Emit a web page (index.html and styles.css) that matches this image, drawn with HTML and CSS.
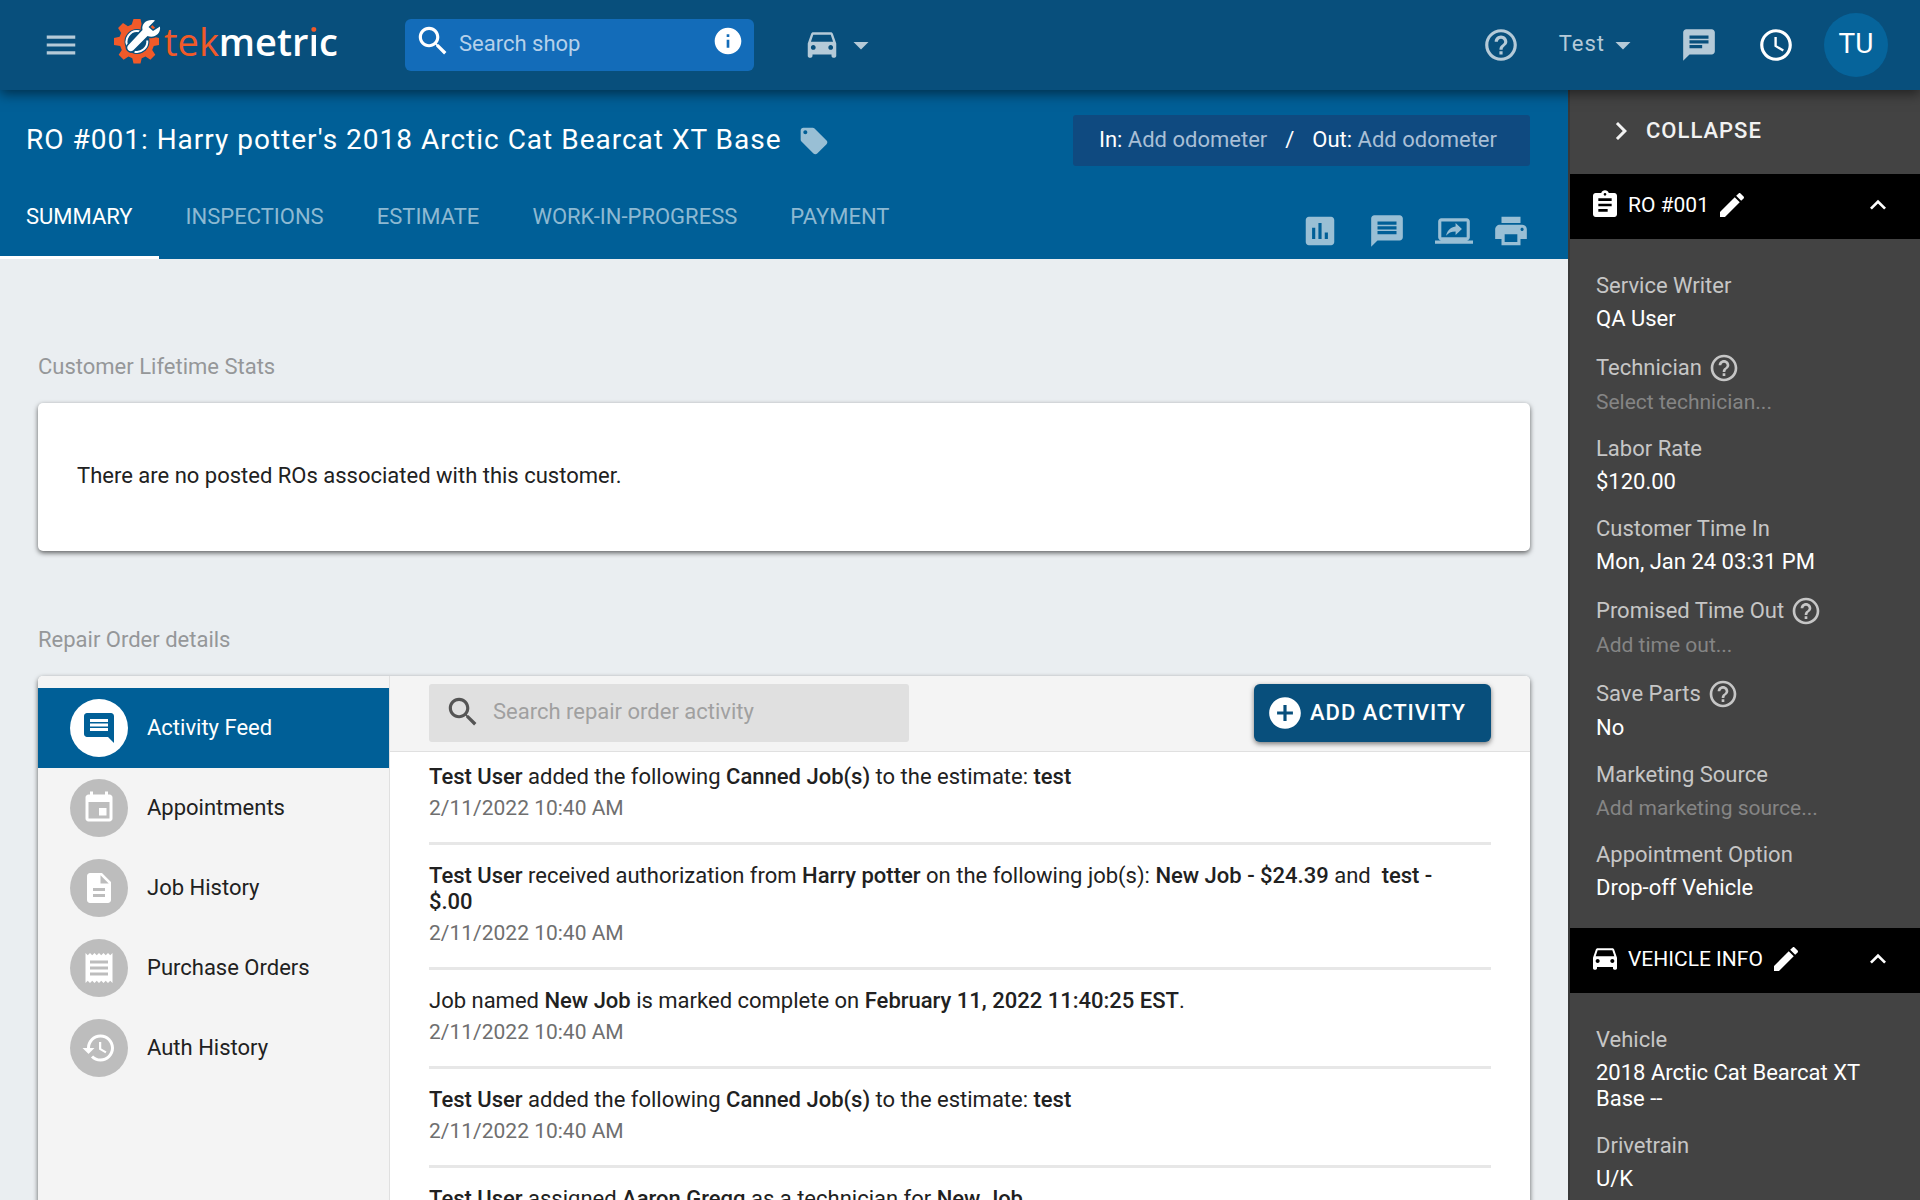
FILE: index.html
```html
<!DOCTYPE html>
<html lang="en">
<head>
  <meta charset="UTF-8">
  <meta name="viewport" content="width=device-width, initial-scale=1.0">
  <title>Tekmetric - RO #001</title>
  <link rel="stylesheet" href="styles.css">
</head>
<body>
  <!-- Icon set -->
  <svg class="icon-set" aria-hidden="true">
    <symbol id="menu" viewBox="0 0 24 24"><path d="M3 18h18v-2H3v2zm0-5h18v-2H3v2zm0-7v2h18V6H3z"/></symbol>
    <symbol id="search" viewBox="0 0 24 24"><path d="M15.5 14h-.79l-.28-.27C15.41 12.59 16 11.11 16 9.5 16 5.91 13.09 3 9.5 3S3 5.91 3 9.5 5.91 16 9.5 16c1.61 0 3.09-.59 4.23-1.57l.27.28v.79l5 4.99L20.49 19l-4.99-5zm-6 0C7.01 14 5 11.99 5 9.5S7.01 5 9.5 5 14 7.01 14 9.5 11.99 14 9.5 14z"/></symbol>
    <symbol id="info" viewBox="0 0 24 24"><path d="M12 2C6.48 2 2 6.48 2 12s4.48 10 10 10 10-4.48 10-10S17.52 2 12 2zm1 15h-2v-6h2v6zm0-8h-2V7h2v2z"/></symbol>
    <symbol id="car" viewBox="0 0 24 24"><path d="M18.92 5.01C18.72 4.42 18.16 4 17.5 4h-11c-.66 0-1.21.42-1.42 1.01L3 11v8c0 .55.45 1 1 1h1c.55 0 1-.45 1-1v-1h12v1c0 .55.45 1 1 1h1c.55 0 1-.45 1-1v-8l-2.08-5.99zM6.5 15c-.83 0-1.5-.67-1.5-1.5S5.67 12 6.5 12s1.5.67 1.5 1.5S7.33 15 6.5 15zm11 0c-.83 0-1.5-.67-1.5-1.5s.67-1.5 1.5-1.5 1.5.67 1.5 1.5-.67 1.5-1.5 1.5zM5 10l1.5-4.5h11L19 10H5z"/></symbol>
    <symbol id="drop" viewBox="0 0 24 24"><path d="M7 10l5 5 5-5z"/></symbol>
    <symbol id="help" viewBox="0 0 24 24"><path d="M11 18h2v-2h-2v2zm1-16C6.48 2 2 6.48 2 12s4.48 10 10 10 10-4.48 10-10S17.52 2 12 2zm0 18c-4.41 0-8-3.59-8-8s3.59-8 8-8 8 3.59 8 8-3.59 8-8 8zm0-14c-2.21 0-4 1.79-4 4h2c0-1.1.9-2 2-2s2 .9 2 2c0 2-3 1.75-3 5h2c0-2.25 3-2.5 3-5 0-2.21-1.79-4-4-4z"/></symbol>
    <symbol id="chat" viewBox="0 0 24 24"><path d="M20 2H4c-1.1 0-1.99.9-1.99 2L2 22l4-4h14c1.1 0 2-.9 2-2V4c0-1.1-.9-2-2-2zM6 9h12v2H6V9zm8 5H6v-2h8v2zm4-6H6V6h12v2z"/></symbol>
    <symbol id="clock" viewBox="0 0 24 24"><path d="M11.99 2C6.47 2 2 6.48 2 12s4.47 10 9.99 10C17.52 22 22 17.52 22 12S17.52 2 11.99 2zM12 20c-4.42 0-8-3.58-8-8s3.58-8 8-8 8 3.58 8 8-3.58 8-8 8zm.5-13H11v6l5.25 3.15.75-1.23-4.5-2.67z"/></symbol>
    <symbol id="tag" viewBox="0 0 24 24"><path d="M21.41 11.58l-9-9C12.05 2.22 11.55 2 11 2H4c-1.1 0-2 .9-2 2v7c0 .55.22 1.05.59 1.42l9 9c.36.36.86.58 1.41.58.55 0 1.05-.22 1.41-.59l7-7c.37-.36.59-.86.59-1.41 0-.55-.23-1.06-.59-1.42zM5.5 7C4.67 7 4 6.33 4 5.5S4.67 4 5.5 4 7 4.67 7 5.5 6.33 7 5.5 7z"/></symbol>
    <symbol id="chart" viewBox="0 0 24 24"><path d="M19 3H5c-1.1 0-2 .9-2 2v14c0 1.1.9 2 2 2h14c1.1 0 2-.9 2-2V5c0-1.1-.9-2-2-2zM9 17H7v-7h2v7zm4 0h-2V7h2v10zm4 0h-2v-4h2v4z"/></symbol>
    <symbol id="message" viewBox="0 0 24 24"><path d="M20 2H4c-1.1 0-1.99.9-1.99 2L2 22l4-4h14c1.1 0 2-.9 2-2V4c0-1.1-.9-2-2-2zm-2 12H6v-2h12v2zm0-3H6V9h12v2zm0-3H6V6h12v2z"/></symbol>
    <symbol id="share" viewBox="0 0 24 24"><path d="M20 18c1.1 0 1.99-.9 1.99-2L22 6c0-1.1-.9-2-2-2H4c-1.1 0-2 .9-2 2v10c0 1.1.9 2 2 2H0v2h24v-2h-4zM4 16V6h16v10.01L4 16zm9-6.87c-3.89.54-5.44 3.2-6 5.87 1.39-1.87 3.22-2.72 6-2.72v2.19l4-3.74L13 7v2.13z"/></symbol>
    <symbol id="print" viewBox="0 0 24 24"><path d="M19 8H5c-1.66 0-3 1.34-3 3v6h4v4h12v-4h4v-6c0-1.66-1.34-3-3-3zm-3 11H8v-5h8v5zm3-7c-.55 0-1-.45-1-1s.45-1 1-1 1 .45 1 1-.45 1-1 1zm-1-9H6v4h12V3z"/></symbol>
    <symbol id="comment" viewBox="0 0 24 24"><path d="M21.99 4c0-1.1-.89-2-1.99-2H4c-1.1 0-2 .9-2 2v12c0 1.1.9 2 2 2h14l4 4-.01-18zM18 14H6v-2h12v2zm0-3H6V9h12v2zm0-3H6V6h12v2z"/></symbol>
    <symbol id="event" viewBox="0 0 24 24"><path d="M17 12h-5v5h5v-5zM16 1v2H8V1H6v2H5c-1.11 0-1.99.9-1.99 2L3 19c0 1.1.89 2 2 2h14c1.1 0 2-.9 2-2V5c0-1.1-.9-2-2-2h-1V1h-2zm3 18H5V8h14v11z"/></symbol>
    <symbol id="document" viewBox="0 0 24 24"><path d="M14 2H6c-1.1 0-1.99.9-1.99 2L4 20c0 1.1.89 2 1.99 2H18c1.1 0 2-.9 2-2V8l-6-6zm2 16H8v-2h8v2zm0-4H8v-2h8v2zm-3-5V3.500L18.500 9H13z"/></symbol>
    <symbol id="receipt" viewBox="0 0 24 24"><path d="M18 17H6v-2h12v2zm0-4H6v-2h12v2zm0-4H6V7h12v2zM3 22l1.500-1.500L6 22l1.500-1.500L9 22l1.500-1.500L12 22l1.500-1.500L15 22l1.500-1.500L18 22l1.500-1.500L21 22V2l-1.500 1.500L18 2l-1.500 1.500L15 2l-1.500 1.500L12 2l-1.500 1.500L9 2 7.500 3.500 6 2 4.500 3.500 3 2v20z"/></symbol>
    <symbol id="history" viewBox="0 0 24 24"><path d="M13 3c-4.970 0-9 4.030-9 9H1l3.890 3.890.070.140L9 12H6c0-3.870 3.130-7 7-7s7 3.130 7 7-3.130 7-7 7c-1.930 0-3.680-.790-4.940-2.060l-1.420 1.420C8.270 19.990 10.510 21 13 21c4.970 0 9-4.030 9-9s-4.030-9-9-9zm-1 5v5l4.280 2.540.720-1.210-3.500-2.080V8H12z"/></symbol>
    <symbol id="add" viewBox="0 0 24 24"><path d="M12 2C6.480 2 2 6.480 2 12s4.480 10 10 10 10-4.480 10-10S17.520 2 12 2zm5 11h-4v4h-2v-4H7v-2h4V7h2v4h4v2z"/></symbol>
    <symbol id="right" viewBox="0 0 24 24"><path d="M10 6L8.590 7.410 13.170 12l-4.580 4.590L10 18l6-6z"/></symbol>
    <symbol id="up" viewBox="0 0 24 24"><path d="M12 8l-6 6 1.410 1.410L12 10.830l4.590 4.580L18 14z"/></symbol>
    <symbol id="clipboard" viewBox="0 0 24 24"><path d="M19 3h-4.180C14.400 1.840 13.300 1 12 1c-1.300 0-2.400.840-2.820 2H5c-1.100 0-2 .9-2 2v14c0 1.100.9 2 2 2h14c1.100 0 2-.9 2-2V5c0-1.100-.9-2-2-2zm-7 0c.550 0 1 .450 1 1s-.450 1-1 1-1-.450-1-1 .450-1 1-1zm2 14H7v-2h7v2zm3-4H7v-2h10v2zm0-4H7V7h10v2z"/></symbol>
    <symbol id="edit" viewBox="0 0 24 24"><path d="M3 17.250V21h3.750L17.810 9.940l-3.750-3.750L3 17.250zM20.710 7.040c.390-.390.390-1.020 0-1.410l-2.340-2.340c-.390-.390-1.020-.390-1.410 0l-1.830 1.830 3.750 3.750 1.830-1.830z"/></symbol>
  </svg>

  <!-- Top bar -->
  <header class="topbar">
    <button class="menu-button" aria-label="Menu"><svg class="icon"><use href="#menu"/></svg></button>
    <a class="logo" href="#">
      <svg class="logo-mark" viewBox="0 0 46 46">
        <path class="gear" fill-rule="evenodd" d="M19.500 1h7l1.200 5.600 3.800 1.600 4.900-3.100 4.900 4.900-3.100 4.900 1.600 3.800 5.200 1.200v7l-5.200 1.200-1.600 3.800 3.100 4.900-4.900 4.900-4.900-3.100-3.800 1.600-1.200 5.300h-7l-1.200-5.300-3.800-1.600-4.900 3.100-4.900-4.900 3.100-4.900-1.600-3.800L0 26.900v-7l5.600-1.200 1.600-3.800L4.100 10 9 5.100l4.900 3.100 3.800-1.600zM23 11.500a12 12 0 1 0 .1 0z"/>
        <circle class="hub" cx="23" cy="23.500" r="12.500"/>
        <path class="ring" d="M25.500 13.300A10.500 10.500 0 0 0 14.500 29.500M33.300 22.500A10.500 10.500 0 0 1 20.500 33.700"/>
        <path class="wrench-edge" d="M46 8.500L39 13l-4.500-4L41 2.500C34 .5 27 5 28.500 12L14 27.500c-2.500 3 1.500 7.500 5 5L33.500 18C40 20.500 47 16 46 8.500z"/>
        <path class="wrench" d="M46 8.500L39 13l-4.500-4L41 2.500C34 .5 27 5 28.500 12L14 27.500c-2.500 3 1.500 7.500 5 5L33.500 18C40 20.500 47 16 46 8.500z"/>
      </svg>
      <span class="logo-text"><span class="logo-tek">tek</span>metr<span class="logo-i">i</span>c</span>
    </a>
    <label class="shop-search">
      <svg class="icon"><use href="#search"/></svg>
      <input type="text" placeholder="Search shop" aria-label="Search shop">
      <svg class="icon-small"><use href="#info"/></svg>
    </label>
    <button class="car-button" aria-label="Vehicles"><svg class="icon"><use href="#car"/></svg><svg class="icon-drop"><use href="#drop"/></svg></button>
    <div class="topbar-right">
      <button aria-label="Help"><svg class="icon"><use href="#help"/></svg></button>
      <button class="shop-button"><span>Test</span><svg class="icon-drop"><use href="#drop"/></svg></button>
      <button aria-label="Messages"><svg class="icon"><use href="#chat"/></svg></button>
      <button class="clock-button" aria-label="Time clock"><svg class="icon"><use href="#clock"/></svg></button>
      <button class="avatar">TU</button>
    </div>
  </header>

  <div class="app">
    <main class="main">
      <!-- Repair order header -->
      <section class="ro-header">
        <div class="ro-title-row">
          <h1>RO #001: Harry potter's 2018 Arctic Cat Bearcat XT Base</h1>
          <button class="tag-button" aria-label="Labels"><svg class="icon-small"><use href="#tag"/></svg></button>
          <div class="odometer">
            <span>In: <a href="#">Add odometer</a></span>
            <span>/</span>
            <span>Out: <a href="#">Add odometer</a></span>
          </div>
        </div>
        <div class="ro-nav-row">
          <nav class="tabs">
            <a class="tab active" href="#">SUMMARY</a>
            <a class="tab" href="#">INSPECTIONS</a>
            <a class="tab" href="#">ESTIMATE</a>
            <a class="tab" href="#">WORK-IN-PROGRESS</a>
            <a class="tab" href="#">PAYMENT</a>
          </nav>
          <div class="ro-actions">
            <button class="wide" aria-label="Report"><svg class="icon"><use href="#chart"/></svg></button>
            <button class="wide" aria-label="Message"><svg class="icon"><use href="#message"/></svg></button>
            <button aria-label="Share"><svg class="icon"><use href="#share"/></svg></button>
            <button aria-label="Print"><svg class="icon"><use href="#print"/></svg></button>
          </div>
        </div>
      </section>

      <div class="content">
        <h2>Customer Lifetime Stats</h2>
        <div class="card stats-card">There are no posted ROs associated with this customer.</div>

        <h2>Repair Order details</h2>
        <div class="card details-card">
          <nav class="side-menu">
            <a class="side-item active" href="#"><span class="bubble"><svg><use href="#comment"/></svg></span>Activity Feed</a>
            <a class="side-item" href="#"><span class="bubble"><svg><use href="#event"/></svg></span>Appointments</a>
            <a class="side-item" href="#"><span class="bubble"><svg><use href="#document"/></svg></span>Job History</a>
            <a class="side-item" href="#"><span class="bubble"><svg><use href="#receipt"/></svg></span>Purchase Orders</a>
            <a class="side-item" href="#"><span class="bubble"><svg><use href="#history"/></svg></span>Auth History</a>
          </nav>
          <div class="feed">
            <div class="feed-bar">
              <label class="feed-search">
                <svg class="icon"><use href="#search"/></svg>
                <input type="text" placeholder="Search repair order activity" aria-label="Search repair order activity">
              </label>
              <button class="add-button"><svg class="icon"><use href="#add"/></svg>ADD ACTIVITY</button>
            </div>
            <ul class="feed-list">
              <li>
                <p><b>Test User</b> added the following <b>Canned Job(s)</b> to the estimate: <b>test</b></p>
                <time>2/11/2022 10:40 AM</time>
              </li>
              <li>
                <p><b>Test User</b> received authorization from <b>Harry potter</b> on the following job(s): <b>New Job - $24.39</b> and &nbsp;<b>test - $.00</b></p>
                <time>2/11/2022 10:40 AM</time>
              </li>
              <li>
                <p>Job named <b>New Job</b> is marked complete on <b>February 11, 2022 11:40:25 EST</b>.</p>
                <time>2/11/2022 10:40 AM</time>
              </li>
              <li>
                <p><b>Test User</b> added the following <b>Canned Job(s)</b> to the estimate: <b>test</b></p>
                <time>2/11/2022 10:40 AM</time>
              </li>
              <li>
                <p><b>Test User</b> assigned <b>Aaron Gregg</b> as a technician for <b>New Job</b></p>
              </li>
            </ul>
          </div>
        </div>
      </div>
    </main>

    <!-- Right panel -->
    <aside class="panel">
      <button class="collapse-button"><svg class="icon-drop"><use href="#right"/></svg>COLLAPSE</button>

      <div class="panel-head">
        <svg class="icon-small"><use href="#clipboard"/></svg>
        <span>RO #001</span>
        <button aria-label="Edit repair order"><svg class="icon-small"><use href="#edit"/></svg></button>
        <button class="fold" aria-label="Fold"><svg class="icon-small"><use href="#up"/></svg></button>
      </div>
      <dl class="panel-list">
        <dt>Service Writer</dt>
        <dd>QA User</dd>
        <dt>Technician <svg class="icon-small"><use href="#help"/></svg></dt>
        <dd class="empty">Select technician...</dd>
        <dt>Labor Rate</dt>
        <dd>$120.00</dd>
        <dt>Customer Time In</dt>
        <dd>Mon, Jan 24 03:31 PM</dd>
        <dt>Promised Time Out <svg class="icon-small"><use href="#help"/></svg></dt>
        <dd class="empty">Add time out...</dd>
        <dt>Save Parts <svg class="icon-small"><use href="#help"/></svg></dt>
        <dd>No</dd>
        <dt>Marketing Source</dt>
        <dd class="empty">Add marketing source...</dd>
        <dt>Appointment Option</dt>
        <dd>Drop-off Vehicle</dd>
      </dl>

      <div class="panel-head">
        <svg class="icon-small"><use href="#car"/></svg>
        <span>VEHICLE INFO</span>
        <button aria-label="Edit vehicle"><svg class="icon-small"><use href="#edit"/></svg></button>
        <button class="fold" aria-label="Fold"><svg class="icon-small"><use href="#up"/></svg></button>
      </div>
      <dl class="panel-list">
        <dt>Vehicle</dt>
        <dd>2018 Arctic Cat Bearcat XT Base --</dd>
        <dt>Drivetrain</dt>
        <dd>U/K</dd>
      </dl>
    </aside>
  </div>
</body>
</html>
```

FILE: styles.css
```css
* {
  box-sizing: border-box;
}

body {
  margin: 0;
  height: 100vh;
  overflow: hidden;
  display: flex;
  flex-direction: column;
  font-family: Roboto, sans-serif;
  font-size: 22px;
  line-height: 26px;
  color: #212121;
  background: #eaeef1;
}

a {
  color: inherit;
  text-decoration: none;
}

button {
  display: flex;
  align-items: center;
  padding: 0;
  border: none;
  background: none;
  color: inherit;
  font: inherit;
  cursor: pointer;
}

input {
  flex: 1;
  min-width: 0;
  padding: 0;
  border: none;
  outline: none;
  background: none;
  color: inherit;
  font: inherit;
}

svg {
  fill: currentColor;
  flex-shrink: 0;
}

.icon-set {
  display: none;
}

.icon {
  width: 38px;
  height: 38px;
}

.icon-drop {
  width: 36px;
  height: 36px;
}

.icon-small {
  width: 32px;
  height: 32px;
}

/* Top bar */
.topbar {
  position: relative;
  z-index: 2;
  flex-shrink: 0;
  display: flex;
  align-items: center;
  height: 90px;
  padding: 0 32px 0 42px;
  background: #084f7c;
  color: #b5cad8;
  box-shadow: 0 4px 12px rgba(0, 0, 0, 0.5);
}

.logo {
  display: flex;
  align-items: center;
  width: 226px;
  margin-left: 34px;
  padding-bottom: 8px;
}

.logo-mark {
  width: 46px;
  height: 46px;
  overflow: visible;
}

.gear {
  fill: #f15a29;
}

.hub {
  fill: #084f7c;
}

.ring {
  fill: none;
  stroke: #fff;
  stroke-width: 2;
}

.wrench-edge {
  stroke: #084f7c;
  stroke-width: 3;
}

.wrench {
  fill: #fff;
}

.logo-text {
  margin-left: 4px;
  color: #fff;
  font-family: "Open Sans", sans-serif;
  font-size: 38px;
  font-weight: 600;
  line-height: 46px;
}

.logo-tek {
  color: #f15a29;
  font-weight: 400;
}

/* Orange dot on a white stem */
.logo-i {
  background: linear-gradient(#f15a29 19px, #fff 19px);
  background-clip: text;
  -webkit-background-clip: text;
  color: transparent;
}

.shop-search {
  display: flex;
  align-items: center;
  width: 349px;
  height: 52px;
  margin-left: 65px;
  padding: 0 10px 8px 9px;
  border-radius: 6px;
  background: #136cb9;
  color: #fff;
}

.shop-search input {
  margin: 5px 7px 0;
}

.shop-search input::placeholder {
  color: #b5d0ea;
  opacity: 1;
}

.car-button {
  gap: 2px;
  margin-left: 49px;
}

.topbar-right {
  display: flex;
  align-items: center;
  gap: 39px;
  margin-left: auto;
}

.shop-button {
  letter-spacing: 1px;
}

.shop-button span {
  padding-bottom: 2px;
}

.clock-button {
  color: #fff;
}

.avatar {
  justify-content: center;
  width: 64px;
  height: 64px;
  margin-left: -10px;
  padding-bottom: 2px;
  border-radius: 50%;
  background: #06649b;
  color: #fff;
  font-size: 28px;
}

.app {
  flex: 1;
  min-height: 0;
  display: flex;
}

.main {
  flex: 1;
  min-width: 0;
  overflow: hidden;
}

/* Repair order header */
.ro-header {
  padding-top: 25px;
  background: #005f97;
  color: #fff;
}

.ro-title-row {
  display: flex;
  align-items: center;
  padding: 0 38px 0 26px;
}

h1 {
  margin: 0;
  padding-bottom: 2px;
  font-size: 28px;
  font-weight: 400;
  line-height: 34px;
  letter-spacing: 1px;
}

.tag-button {
  margin-left: 16px;
  color: #99bfd5;
}

.odometer {
  display: flex;
  gap: 18px;
  height: 51px;
  margin-left: auto;
  padding: 12px 33px 0 26px;
  border-radius: 3px;
  background: #0f4a80;
}

.odometer a {
  color: #a9bfd6;
}

.ro-nav-row {
  display: flex;
  justify-content: space-between;
  padding-right: 38px;
}

.tabs {
  display: flex;
  gap: 1px;
}

.tab {
  padding: 38px 26px 26px;
  border-bottom: 3px solid transparent;
  color: #8db9d2;
}

.tab.active {
  border-color: #fff;
  color: #fff;
}

.ro-actions {
  display: flex;
  align-items: center;
  gap: 19px;
  padding-top: 36px;
  color: #99bfd5;
}

.ro-actions .wide {
  margin-right: 10px;
}

/* Page content */
.content {
  padding: 95px 38px 0;
}

h2 {
  margin: 0 0 23px;
  color: #959799;
  font-size: 22px;
  font-weight: 400;
  line-height: 26px;
}

.card {
  border-radius: 5px;
  background: #fff;
  box-shadow: 0 2px 5px rgba(0, 0, 0, 0.6);
}

.stats-card {
  margin-bottom: 76px;
  padding: 60px 39px 62px;
}

.details-card {
  display: flex;
  min-height: 700px;
  overflow: hidden;
}

.side-menu {
  width: 352px;
  padding-top: 12px;
  border-right: 1px solid #e0e0e0;
  background: #f4f4f4;
}

.side-item {
  display: flex;
  align-items: center;
  gap: 19px;
  height: 80px;
  padding-left: 32px;
}

.side-item.active {
  background: #005f97;
  color: #fff;
}

.bubble {
  display: flex;
  align-items: center;
  justify-content: center;
  width: 58px;
  height: 58px;
  border-radius: 50%;
  background: #bdbdbd;
  color: #fff;
}

.bubble svg {
  width: 36px;
  height: 36px;
}

.active .bubble {
  background: #fff;
  color: #005f97;
}

.feed {
  flex: 1;
}

.feed-bar {
  display: flex;
  align-items: center;
  justify-content: space-between;
  height: 76px;
  padding: 0 39px 2px;
  border-bottom: 1px solid #e0e0e0;
  background: #f4f4f4;
}

.feed-search {
  display: flex;
  align-items: center;
  gap: 11px;
  width: 480px;
  height: 58px;
  padding: 0 15px 2px;
  border-radius: 3px;
  background: #e0e0e0;
  color: #555;
}

.feed-search input::placeholder {
  color: #a0a0a0;
  opacity: 1;
}

.add-button {
  gap: 6px;
  height: 58px;
  padding: 0 25px 0 12px;
  border-radius: 6px;
  background: #084f7c;
  color: #fff;
  font-weight: 500;
  letter-spacing: 1px;
  box-shadow: 0 2px 5px rgba(0, 0, 0, 0.5);
}

.feed-list {
  margin: 0;
  padding: 0 39px;
  list-style: none;
}

.feed-list li {
  padding: 18px 0 21px;
  border-bottom: 3px solid #e7e7e7;
}

.feed-list li:first-child {
  padding-top: 12px;
}

.feed-list p {
  margin: 0 0 5px;
  padding-right: 26px;
}

.feed-list b {
  font-weight: 500;
}

.feed-list time {
  display: block;
  color: #6f6f6f;
  font-size: 21px;
}

/* Right panel */
.panel {
  width: 352px;
  flex-shrink: 0;
  overflow: hidden;
  border-left: 2px solid #393939;
  background: #434343;
  color: #fff;
}

.collapse-button {
  gap: 7px;
  height: 84px;
  padding: 0 33px 2px;
  color: #f2f2f2;
  font-weight: 500;
  letter-spacing: 1px;
}

.panel-head {
  display: flex;
  align-items: center;
  gap: 7px;
  height: 65px;
  padding: 0 26px 4px 19px;
  background: #000;
  font-size: 21px;
}

.panel-head .fold {
  margin-left: auto;
}

.panel-list {
  margin: 0;
  padding: 34px 26px 6px;
}

.panel-list dt {
  display: flex;
  align-items: center;
  gap: 6px;
  margin-bottom: 7px;
  color: #c6c6c6;
}

.panel-list dt svg {
  margin: -1px 0 -2px;
}

.panel-list dd {
  margin: 0 0 21px;
}

.panel-list .empty {
  color: #858585;
  font-size: 21px;
}
```
